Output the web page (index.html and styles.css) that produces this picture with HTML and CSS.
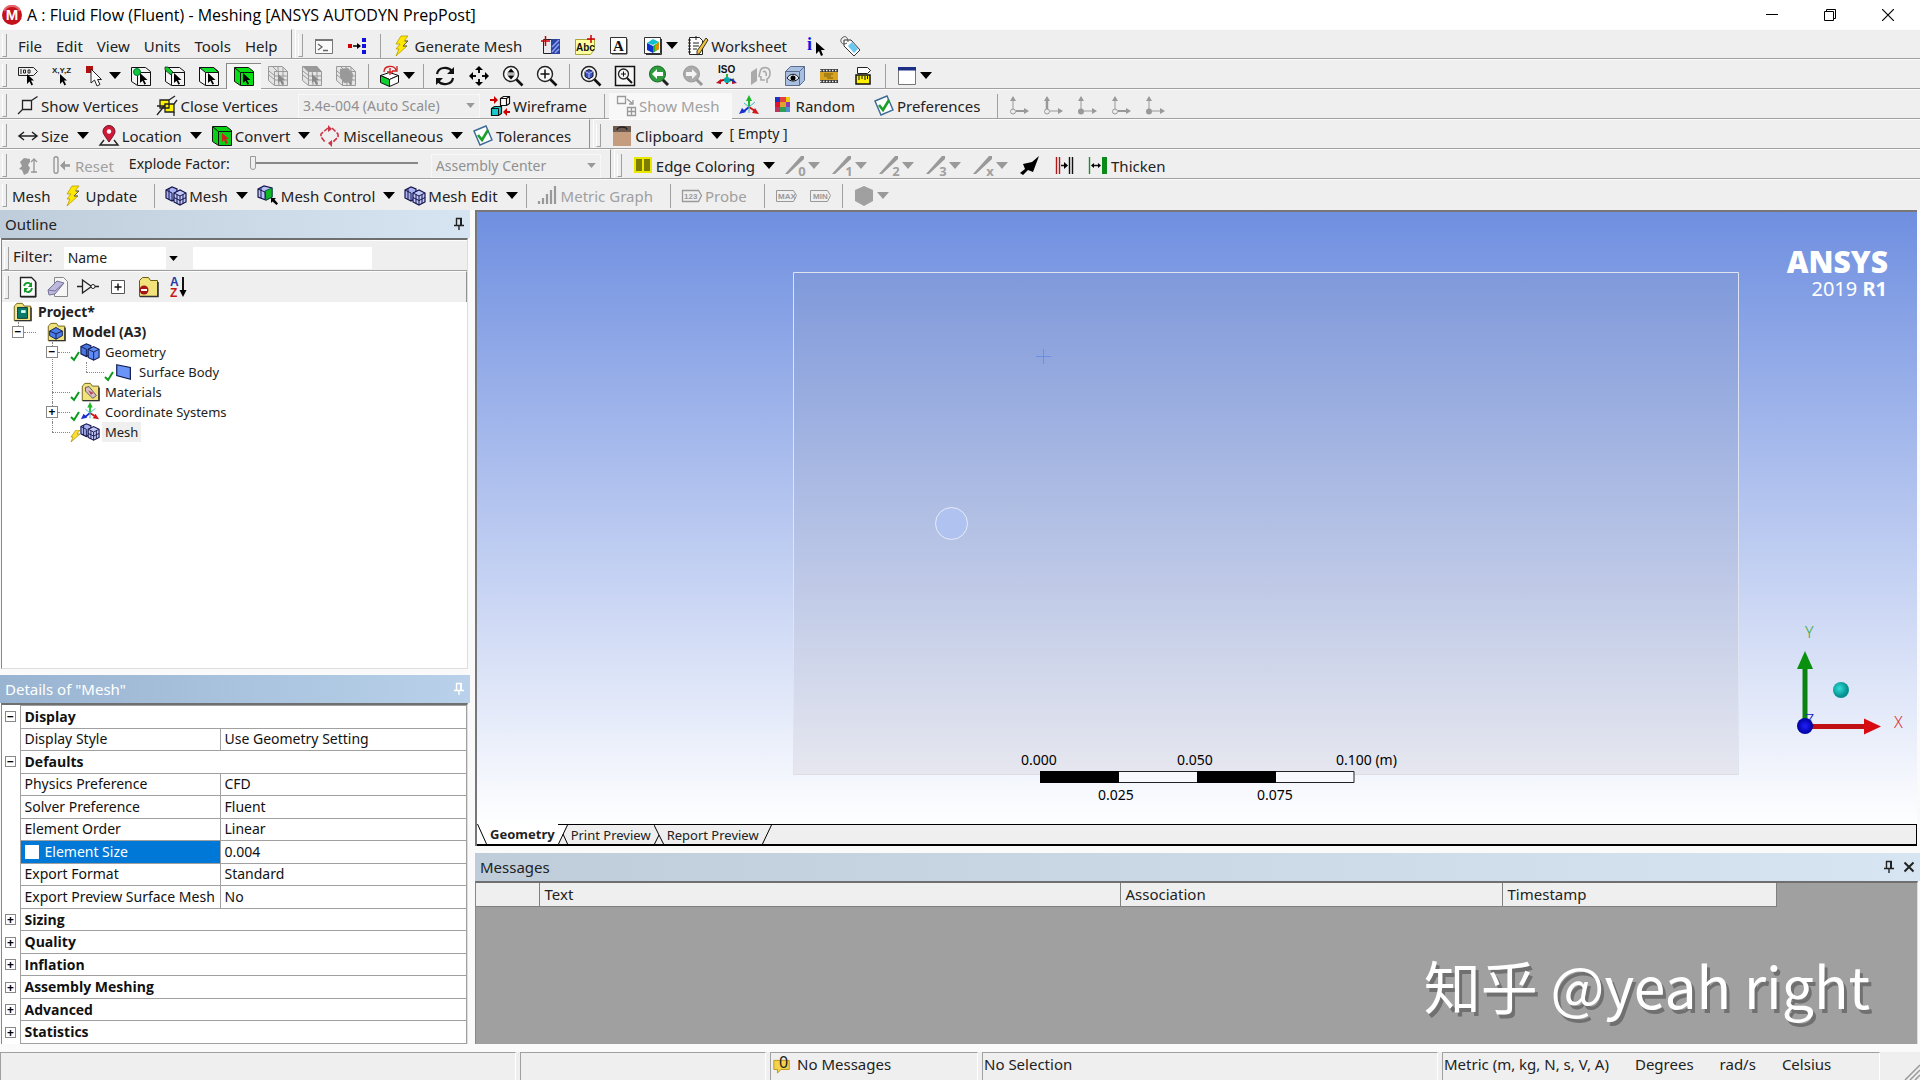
FILE: index.html
```html
<!DOCTYPE html>
<html lang="en">
<head>
  <meta charset="UTF-8" />
  <meta name="viewport" content="width=device-width, initial-scale=1" />
  <title>A : Fluid Flow (Fluent) - Meshing [ANSYS AUTODYN PrepPost]</title>
  <link rel="stylesheet" href="styles.css">
</head>
<body>

  <!-- Icon sprite -->
  <svg class="sprite" aria-hidden="true">
    <symbol id="i-app" viewBox="0 0 22 22"><circle cx="11" cy="11" r="10" fill="#c4121b"/><path d="M3 7a9 9 0 0 1 16 0" fill="none" stroke="#e8656b" stroke-width="2"/><text x="11" y="16" text-anchor="middle" font-family="Liberation Sans" font-size="15" font-weight="700" fill="#fff">M</text></symbol>
    <symbol id="i-console" viewBox="0 0 22 22"><path d="M2.500 4.500h17v14h-17z" fill="#fafafa" stroke="#777"/><path d="M2 5h18" stroke="#777" stroke-width="2"/><path d="M5 9l4 3-4 3M10 15.500h5" fill="none" stroke="#666" stroke-width="1.300"/></symbol>
    <symbol id="i-tree" viewBox="0 0 22 22"><path d="M1 9h4v4H1z" fill="#d00000"/><path d="M6 11h6" stroke="#000" stroke-width="1.500"/><path d="M10 8l4 3-4 3z"/><path d="M15 3h4v4h-4zM15 9h4v4h-4zM15 15h4v4h-4z" fill="#1010e0"/></symbol>
    <symbol id="i-bolt" viewBox="0 0 22 22"><path d="M10 1h7l-4 5h4l-5 5h4L5 21l3-7H5l4-5H5z" fill="#ffe800" stroke="#b99c00" stroke-width=".8"/><path d="M14 6h3l-5 5h4" fill="none" stroke="#555" stroke-width=".9"/></symbol>
    <symbol id="i-section" viewBox="0 0 22 22"><path d="M3.500 4.500h16v14h-16z" fill="#e9e9ee" stroke="#222"/><path d="M11 4h9v15h-9z" fill="#2a43a5"/><path d="M12 12l7-7M12 17l7-8M15 18l4-4" stroke="#8da2ee" stroke-width="1.500"/><path d="M1 6h9M5.500 1v10" stroke="#d00000" stroke-width="1.500"/></symbol>
    <symbol id="i-abc" viewBox="0 0 22 22"><path d="M1.500 4.500h19v10l-4 5h-15z" fill="#ffffa0" stroke="#a6a63a"/><text x="2" y="16" font-family="Liberation Sans Narrow, Liberation Sans" font-size="10" font-weight="700" fill="#111">Abc</text><path d="M13 4h8M17 0v8" stroke="#d00000" stroke-width="1.500"/></symbol>
    <symbol id="i-text" viewBox="0 0 22 22"><path d="M2.500 2.500h16v16h-16z" fill="#fff" stroke="#333"/><path d="M19 4v15H4" fill="none" stroke="#333"/><text x="5" y="16" font-family="Liberation Serif" font-size="15" font-weight="700" fill="#111">A</text></symbol>
    <symbol id="i-image" viewBox="0 0 22 22"><path d="M2.500 2.500h16v16h-16z" fill="#fff" stroke="#333"/><path d="M19.500 4v15.500H4" fill="none" stroke="#333"/><path d="M5 8l6-4 6 3-6 3z" fill="#10c0d0"/><path d="M5 8l6 3v7l-6-3z" fill="#1030d0"/><path d="M11 11l6-4v7l-6 4z" fill="#20b020"/><path d="M13 11l4-4v7l-4 2z" fill="#e09000"/></symbol>
    <symbol id="i-worksheet" viewBox="0 0 22 22"><path d="M2.500 2.500h10l3 3v14h-13z" fill="#fff" stroke="#222"/><path d="M1 5h3M1 8h3M1 11h3M1 14h3M1 17h3M6 8h6M6 11h6M6 14h4M9 1v4" stroke="#222"/><path d="M19 3l2 2-8 13-3 2 0-4z" fill="#f0c33c" stroke="#222" stroke-width=".9"/></symbol>
    <symbol id="i-info" viewBox="0 0 22 22"><text x="2" y="15" font-family="Liberation Serif" font-size="18" font-weight="700" fill="#1515e0">i</text><path d="M11 7v12l3-3 2 5 2-1-2-5h4z"/></symbol>
    <symbol id="i-tag" viewBox="0 0 22 22"><path d="M5 5l7 0 9 10-6 6-10-10z" fill="#fff" stroke="#333"/><path d="M9 11l4-4 6 7-4 4z" fill="#69c7f0"/><path d="M8 8C3 11 0 6 3 3s6-1 6 4" fill="none" stroke="#555"/></symbol>

    <symbol id="i-tagpick" viewBox="0 0 22 22"><path d="M1.500 2.500h15l4 4-4 4h-15z" fill="none" stroke="#222"/><path d="M4 4v5M6.500 5v3h2V5zM11 5v3h2V5z" fill="none" stroke="#222"/><path d="M10 9v10l2.500-2.500 2 4 1.500-1-2-4h3z"/></symbol>
    <symbol id="i-xyz" viewBox="0 0 22 22"><text x="1" y="8" font-family="Liberation Sans" font-size="8" font-weight="700" fill="#222">X,Y,Z</text><path d="M9 9v10l2.500-2.500 2 4 1.500-1-2-4h3z"/></symbol>
    <symbol id="i-pick" viewBox="0 0 22 22"><path d="M1 1h7v7H1z" fill="#b01010"/><path d="M6 4v14l3.500-3 2.500 6 3-1.500-2.500-5h4z" fill="#fff" stroke="#222"/></symbol>
    <symbol id="i-cursor" viewBox="0 0 22 22"><path d="M10 8v10l2.500-2.300 2 4 1.500-1-2-3.700h3.500z"/></symbol>
    <symbol id="i-vertex" viewBox="0 0 22 22"><path d="M1.500 2.500h14l5 4v14h-13l-6-4z" fill="#f4f4f4" stroke="#111"/><path d="M7.500 20V7.500h13" fill="none" stroke="#111"/><circle cx="7" cy="7" r="3.500" fill="#10c830" stroke="#075"/><use href="#i-cursor"/></symbol>
    <symbol id="i-edge" viewBox="0 0 22 22"><path d="M1.500 2.500h14l5 4v14h-13l-6-4z" fill="#f4f4f4" stroke="#111"/><path d="M7.500 20V7.500h13" fill="none" stroke="#111"/><path d="M1 2h3l5 5-2 3-6-5z" fill="#10c830" stroke="#111" stroke-width=".7"/><use href="#i-cursor"/></symbol>
    <symbol id="i-face" viewBox="0 0 22 22"><path d="M1.500 2.500h14l5 4v14h-13l-6-4z" fill="#f4f4f4" stroke="#111"/><path d="M1.500 2.500h14l5 5h-13z" fill="#10e030" stroke="#111"/><path d="M7.500 20V7.500" stroke="#111"/><use href="#i-cursor"/></symbol>
    <symbol id="i-body" viewBox="0 0 22 22"><path d="M1.500 2.500h14l5 4v14h-13l-6-4z" fill="#08e015" stroke="#111"/><path d="M2 3l5.500 4.500V20M7.500 7.500h13" fill="none" stroke="#111"/><use href="#i-cursor"/></symbol>
    <symbol id="i-meshgray" viewBox="0 0 22 22"><path d="M1.500 1.500h14l5 5v14h-13l-6-5z" fill="#e4e4e4" stroke="#999"/><path d="M7.500 20V6.500h13M2 6l6 5h12M2 10l6 5h12M11 2l1 18M16 2v18M6 2l5 5" fill="none" stroke="#999"/><path d="M11 9v9l2-2 2 4 2-1-2-4h3z" fill="#888"/></symbol>
    <symbol id="i-meshface" viewBox="0 0 22 22"><use href="#i-meshgray"/><path d="M1 1h15l5 6H7z" fill="#999"/></symbol>
    <symbol id="i-meshbody" viewBox="0 0 22 22"><use href="#i-meshgray"/><path d="M5 4l8-1 5 6-1 8-8 1-4-6z" fill="#999"/></symbol>
    <symbol id="i-orient" viewBox="0 0 22 22"><path d="M1.500 10.500l9-3 9 3-9 4z" fill="#fff" stroke="#111"/><path d="M1.500 10.500l9 4v7l-9-4z" fill="#10d030" stroke="#111"/><path d="M19.500 10.500l-9 4v7l9-4z" fill="#fff" stroke="#111"/><path d="M5 7c0-7 10-7 12-2M18 1v5h-5M11 3v7M8 7h6" fill="none" stroke="#d02020" stroke-width="1.300"/></symbol>
    <symbol id="i-rotate" viewBox="0 0 22 22"><path d="M3 9c1-7 11-8 15-3M19 13c-1 7-11 8-15 3" fill="none" stroke="#111" stroke-width="2.200"/><path d="M20 2v7h-7zM2 20v-7h7z" fill="#111"/></symbol>
    <symbol id="i-pan" viewBox="0 0 22 22"><path d="M11 4v4M11 14v4M4 11h4M14 11h4" stroke="#111" stroke-width="2"/><path d="M11 1l4 4H7zM11 21l4-4H7zM1 11l4-4v8zM21 11l-4-4v8z"/></symbol>
    <symbol id="i-lens" viewBox="0 0 22 22"><circle cx="9" cy="9" r="7.500" fill="#f8f8f8" stroke="#222" stroke-width="1.400"/><path d="M14.500 14.500l6 6" stroke="#111" stroke-width="2.600"/></symbol>
    <symbol id="i-zoom" viewBox="0 0 22 22"><use href="#i-lens"/><path d="M9 3.500l3.500 4h-7zM9 14.500l3.500-4h-7z"/><path d="M5 9h8" stroke="#777"/></symbol>
    <symbol id="i-zoomin" viewBox="0 0 22 22"><use href="#i-lens"/><path d="M9 4.500v9M4.500 9h9" stroke="#111" stroke-width="1.500"/></symbol>
    <symbol id="i-zoomfit" viewBox="0 0 22 22"><use href="#i-lens"/><path d="M5 6.500l4-2 4 2v5l-4 2.500-4-2.500z" fill="#3c52c0" stroke="#112"/><path d="M5 6.500l4 2 4-2M9 9v4" fill="none" stroke="#b4c2ff"/></symbol>
    <symbol id="i-zoombox" viewBox="0 0 22 22"><path d="M1.500 1.500h19v19h-19z" fill="#f6f6f6" stroke="#111" stroke-width="1.500"/><circle cx="9.500" cy="9" r="5" fill="none" stroke="#222" stroke-width="1.300"/><path d="M13 13l5 5" stroke="#111" stroke-width="2"/><path d="M7 9h5M9.500 6.500v5" stroke="#111"/></symbol>
    <symbol id="i-zoomprev" viewBox="0 0 22 22"><path d="M14 14l6 6" stroke="#222" stroke-width="3"/><circle cx="9.500" cy="9" r="8" fill="#2c9c3c" stroke="#176a24"/><path d="M4 9l5-5v3h6v4H9v3z" fill="#fff"/></symbol>
    <symbol id="i-zoomnext" viewBox="0 0 22 22"><path d="M14 14l6 6" stroke="#999" stroke-width="3"/><circle cx="9.500" cy="9" r="8" fill="#aaa" stroke="#999"/><path d="M15 9l-5-5v3H4v4h6v3z" fill="#f4f4f4"/></symbol>
    <symbol id="i-iso" viewBox="0 0 22 22"><text x="2" y="8" font-family="Liberation Sans" font-size="10" font-weight="700" fill="#111">ISO</text><path d="M11 12v-3M11 17l7-3" stroke="#090" stroke-width="1.500"/><path d="M4 16l7-2v5" stroke="#c00" stroke-width="2" fill="none"/><circle cx="11" cy="15" r="3" fill="#0aa" /><path d="M0 18l5-4v5zM21 18l-5-4v5z" fill="#c01020"/><path d="M14 14l5 3" stroke="#1030c0" stroke-width="2"/></symbol>
    <symbol id="i-lookat" viewBox="0 0 22 22"><path d="M1 7l6-4v13l-6 4z" fill="#aaa"/><path d="M10 7c1-6 10-6 10 1 0 3-1 5-3 6v4M10 7l-1 4 2 1v3h4M13 7c2-2 4 1 3 4" fill="none" stroke="#aaa" stroke-width="1.600"/></symbol>
    <symbol id="i-eye" viewBox="0 0 22 22"><path d="M1.500 6.500l5-5h14v14l-5 5h-14z" fill="#a9bfe0" stroke="#5b6d8c"/><path d="M1.500 6.500h14v14M15.500 6.500l5-5" fill="none" stroke="#5b6d8c"/><path d="M3 13c3-5 9-5 12 0-3 4-9 4-12 0z" fill="#dfe8f5" stroke="#111"/><circle cx="9" cy="13" r="2.500"/></symbol>
    <symbol id="i-film" viewBox="0 0 22 22"><path d="M2 4h18v14H2z" fill="#3b3b3b"/><path d="M2 7h18v8H2z" fill="#d9a520"/><path d="M2 5.500h18M2 16.500h18" stroke="#eee" stroke-width="1.500" stroke-dasharray="1.500 1.500"/><path d="M6 9h9M6 11h7M9 13h6" stroke="#7a5a10"/></symbol>
    <symbol id="i-ruler" viewBox="0 0 22 22"><path d="M5.500 2.500h10l3 3-3 3h-10z" fill="#fff" stroke="#222"/><path d="M4 10h14v9H4z" fill="#fff000" stroke="#111" stroke-width="1.500"/><path d="M7 11v4M10 11v3M13 11v4M15.500 11v3" stroke="#111"/></symbol>
    <symbol id="i-window" viewBox="0 0 22 22"><path d="M2.500 2.500h17v17h-17z" fill="#fff" stroke="#777"/><path d="M2 2h18v3.500H2z" fill="#1b2f84"/></symbol>

    <symbol id="i-showvert" viewBox="0 0 22 22"><path d="M5.500 5.500h9v9h-9zM14.500 5.500l6-4M1 19l4.500-4.500" fill="none" stroke="#222" stroke-width="1.300"/></symbol>
    <symbol id="i-closevert" viewBox="0 0 22 22"><path d="M4 5h9v8H4zM9 9h9v8H9z" fill="#fff200" stroke="#222" stroke-width="1.300"/><path d="M13 5l6-4M1 20l8-10M1 11h8M18 9l3-4M18 17v4" stroke="#222" stroke-width="1.300"/></symbol>
    <symbol id="i-wire" viewBox="0 0 22 22"><path d="M11.500 3.500l3-2h6v7l-3 2h-6zM11.500 3.500h6v7M17.500 3.500l3-2" fill="#fff" stroke="#111" stroke-width="1.200"/><path d="M2.500 13.500l3-2h7v7l-3 2h-7z" fill="#19c8c8" stroke="#111" stroke-width="1.200"/><path d="M2.500 13.500h7v7" fill="none" stroke="#111"/><path d="M1 5h4M21 17h-4" stroke="#c00" stroke-width="2"/><path d="M5 1l4 4-4 4zM18 13l-4 4 4 4z" fill="#c00"/></symbol>
    <symbol id="i-showmesh" viewBox="0 0 22 22"><path d="M2.500 1.500h8v7h-8zM12.500 12.500h8v8h-8zM16.500 12.500v8M12.500 16.500h8M12 4l6 5M18 5v4h-4" fill="none" stroke="#999" stroke-width="1.300"/></symbol>
    <symbol id="i-axes" viewBox="0 0 22 22"><path d="M11 13V4" stroke="#18b828" stroke-width="2"/><path d="M11 0l3 6H8z" fill="#18b828"/><path d="M11 12l-6 5" stroke="#1830d0" stroke-width="2"/><path d="M1 19l3-6 4 4z" fill="#1830d0"/><path d="M11 12l6 4" stroke="#d01818" stroke-width="2"/><path d="M21 19l-7-1 3-5z" fill="#d01818"/><path d="M11 12l6-5M11 12L6 8M11 12v6" stroke="#38b8c8"/></symbol>
    <symbol id="i-random" viewBox="0 0 22 22"><path d="M3 2h5v5H3z" fill="#2030c0"/><path d="M8 2h6v5H8z" fill="#e04040"/><path d="M14 2h4v5h-4z" fill="#f0d000"/><path d="M3 7h5v5H3z" fill="#e01030"/><path d="M8 7h6v5H8z" fill="#e0a030"/><path d="M14 7h4v5h-4z" fill="#8a3ab0"/><path d="M3 12h5v5H3z" fill="#c03060"/><path d="M8 12h6v5H8z" fill="#30a050"/><path d="M14 12h4v5h-4z" fill="#5090d0"/></symbol>
    <symbol id="i-check" viewBox="0 0 22 22"><path d="M2 6l12-5 6 14-12 5z" fill="#fff" stroke="#3b6a96" stroke-width="1.400"/><path d="M6 10l4 5 6-10" fill="none" stroke="#18a028" stroke-width="2.600"/></symbol>
    <symbol id="i-dir1" viewBox="0 0 22 22"><path d="M5 14V5" stroke="#999"/><path d="M5 1l3 5H2zM21 16l-5-3v6z" fill="#999"/><path d="M8 16h9" stroke="#999" stroke-width="2"/><circle cx="5" cy="16.500" r="2.500" fill="#eee" stroke="#999"/></symbol>
    <symbol id="i-dir2" viewBox="0 0 22 22"><path d="M5 14V5" stroke="#999" stroke-width="2.500"/><path d="M5 1l3 5H2zM21 16l-5-3v6z" fill="#999"/><path d="M8 16h9" stroke="#999"/><circle cx="5" cy="16.500" r="2.500" fill="#eee" stroke="#999"/></symbol>
    <symbol id="i-dir3" viewBox="0 0 22 22"><path d="M5 14V5M8 16h9" stroke="#999"/><path d="M5 1l3 5H2zM21 16l-5-3v6z" fill="#999"/><circle cx="5" cy="16.500" r="3" fill="#999"/></symbol>

    <symbol id="i-size" viewBox="0 0 22 22"><path d="M3 11h16M7 7l-5 4 5 4M15 7l5 4-5 4" fill="none" stroke="#222" stroke-width="1.500"/></symbol>
    <symbol id="i-pin" viewBox="0 0 22 22"><path d="M11 17C7 11 5 9 5 6.500a6 6 0 0 1 12 0C17 9 15 11 11 17z" fill="#d01838" stroke="#701020"/><circle cx="11" cy="6.500" r="2.200" fill="#fff"/><path d="M6 15l-4 5h18l-4-5" fill="none" stroke="#222" stroke-width="1.400"/></symbol>
    <symbol id="i-convert" viewBox="0 0 22 22"><path d="M1.500 1.500h14l5 4v15h-13l-6-4z" fill="#08d015" stroke="#111"/><path d="M2 2l5.500 4.500V20M7.500 6.500h13" fill="none" stroke="#111"/><path d="M11 8v9l2-2 2 4 2-1-2-4h3z" fill="#d02020"/></symbol>
    <symbol id="i-misc" viewBox="0 0 22 22"><path d="M9 3L2 9v3l4 5M13 3l6 6v3l-6 6" fill="none" stroke="#cc3344" stroke-width="1.600" stroke-dasharray="5 1.500"/><path d="M9 0l4 4-4 3zM13 15l-4 3 4 4z" fill="#cc3344"/></symbol>
    <symbol id="i-clip" viewBox="0 0 22 22"><path d="M2 2h18v19H2z" fill="#c69c7e"/><path d="M2 1h18v6H2z" fill="#6d5b52"/><path d="M6 5c0-4 10-4 10 0" fill="none" stroke="#222" stroke-width="1.300"/></symbol>
    <symbol id="i-explode" viewBox="0 0 22 22"><path d="M3 7l4-4 6 1v3l-2 3 2 3-2 5-4 2-2-5-3-1 3-3z" fill="#999"/><path d="M17 5v13M14 7l3-3 3 3M14 17h6" fill="none" stroke="#999" stroke-width="1.400"/></symbol>
    <symbol id="i-reset" viewBox="0 0 22 22"><path d="M3 4c0-3 4-3 4 0v12c0 3-4 3-4 0z" fill="none" stroke="#999" stroke-width="1.400"/><path d="M12 10.500h7" stroke="#999" stroke-width="2.500"/><path d="M9 10.500l5-5v10z" fill="#999"/></symbol>
    <symbol id="i-coloring" viewBox="0 0 22 22"><path d="M2 2h18v16H2z" fill="#e8e800"/><path d="M4 4h6v12H4zM12 4h6v12h-6z" fill="#7c7c00"/></symbol>
    <symbol id="i-edgeline" viewBox="0 0 22 22"><path d="M1 19h3L20 4V1h-3z" fill="#999"/></symbol>
    <symbol id="i-arrowne" viewBox="0 0 22 22"><path d="M1 18l5-4-2-5 9-2 7-6-3 8-3 8-5-2-5 5z"/></symbol>
    <symbol id="i-gap" viewBox="0 0 22 22"><path d="M3.500 2v17M6.500 2v17" stroke="#b01818" stroke-width="1.400"/><path d="M16.500 2v17M19.500 2v17M8 10.500h5" stroke="#111" stroke-width="1.400"/><path d="M11 7l4 3.500-4 3.500z"/></symbol>
    <symbol id="i-thicken" viewBox="0 0 22 22"><path d="M2.500 2v17" stroke="#18902a" stroke-width="1.400"/><path d="M15 2h5v17h-5z" fill="#0a8a18"/><path d="M5 10.500h7" stroke="#111" stroke-width="1.500"/><path d="M7 8l-3 2.500L7 13zM11 8l3 2.500-3 2.500z"/></symbol>

    <symbol id="i-cubes" viewBox="0 0 22 22"><path d="M1 5l6-3 5 2v9l-5 3-6-3z" fill="#a9b2f0" stroke="#14144a" stroke-width="1.200"/><path d="M9 8l6-3 6 3v9l-6 3-6-3z" fill="#c3caf8" stroke="#14144a" stroke-width="1.200"/><path d="M9 8l6 3 6-3M15 11v9M1 5l6 3v8M12 9.500v9M18 9.500v9M9 12.500l6 3 6-3M4 3.500v11" fill="none" stroke="#14144a"/></symbol>
    <symbol id="i-control" viewBox="0 0 22 22"><path d="M1 4l6-3 8 2v9l-6 3-8-3z" fill="#b9c1f6" stroke="#14144a" stroke-width="1.200"/><path d="M8 6l7-3v9l-6 3z" fill="#10b828" stroke="#063" /><path d="M1 4l7 3v7M4 3v10" fill="none" stroke="#14144a"/><path d="M14 13h5l-1.500 1.500 3.500 4-1.500 1.500-4-3.500-1.500 1.500z"/></symbol>
    <symbol id="i-geom" viewBox="0 0 22 22"><path d="M1 5l6-3 5 2v9l-5 3-6-3z" fill="#4a78e0" stroke="#101c50" stroke-width="1.200"/><path d="M9 8l6-3 6 3v9l-6 3-6-3z" fill="#5e8cf4" stroke="#101c50" stroke-width="1.200"/><path d="M9 8l6 3 6-3M15 11v9M1 5l6 3v8" fill="none" stroke="#101c50"/></symbol>
    <symbol id="i-graph" viewBox="0 0 22 22"><path d="M2 19v-3M6 19v-6M10 19V9M14 19V5M18 19V1" stroke="#999" stroke-width="2.200"/></symbol>
    <symbol id="i-probe" viewBox="0 0 22 22"><path d="M1.500 5.500h16l3 5-3 6h-16z" fill="none" stroke="#999" stroke-width="1.300"/><text x="3" y="14" font-family="Liberation Sans" font-size="8" font-weight="700" fill="#999">123</text></symbol>
    <symbol id="i-max" viewBox="0 0 22 22"><path d="M1.500 5.500h17l3 5-3 6h-17z" fill="none" stroke="#999"/><text x="3" y="14" font-family="Liberation Sans Narrow, Liberation Sans" font-size="8" font-weight="700" fill="#999">MAX</text></symbol>
    <symbol id="i-min" viewBox="0 0 22 22"><path d="M1.500 5.500h17l3 5-3 6h-17z" fill="none" stroke="#999"/><text x="4" y="14" font-family="Liberation Sans Narrow, Liberation Sans" font-size="8" font-weight="700" fill="#999">MIN</text></symbol>
    <symbol id="i-hex" viewBox="0 0 22 22"><path d="M11 1l9 4v11l-9 5-9-5V5z" fill="#a0a0a0"/></symbol>

    <symbol id="i-refresh" viewBox="0 0 22 22"><path d="M3.500 1.500h11l4 4v15h-15z" fill="#fff" stroke="#222" stroke-width="1.300"/><path d="M19 6v15H4" fill="none" stroke="#222"/><path d="M7 10c1-4 6-4 7-1M15 12c-1 5-6 5-7 2" fill="none" stroke="#139a28" stroke-width="1.800"/><path d="M15 6v5h-4zM7 17v-5h4z" fill="#139a28"/></symbol>
    <symbol id="i-eraser" viewBox="0 0 22 22"><path d="M7.500 1.500h9l4 4v15h-13z" fill="#f6f6f6" stroke="#888"/><path d="M1 14l9-9 7 2-9 11-6 1z" fill="#bdb9dd" stroke="#77739a"/><path d="M1 14l7 1 9-8" fill="none" stroke="#77739a"/></symbol>
    <symbol id="i-gate" viewBox="0 0 22 22"><path d="M5.500 4l9 6.500-9 6.500zM0 10.500h5M18 10.500h4" fill="none" stroke="#222" stroke-width="1.300"/><circle cx="16" cy="10.500" r="2" fill="#fff" stroke="#222"/></symbol>
    <symbol id="i-plusbox" viewBox="0 0 22 22"><path d="M4.500 4.500h13v13h-13z" fill="#fff" stroke="#555"/><path d="M7.500 11h7M11 7.500v7" stroke="#111" stroke-width="1.400"/></symbol>
    <symbol id="i-folder" viewBox="0 0 22 22"><path d="M2.500 20.500v-16l3-3h6l2 3h7v16z" fill="#f1e27c" stroke="#6b5e14"/><path d="M3 20.500h18V6" fill="none" stroke="#333" stroke-width="1.600"/></symbol>
    <symbol id="i-hide" viewBox="0 0 22 22"><use href="#i-folder"/><circle cx="7" cy="14" r="4.500" fill="#a51515"/><path d="M4 14h6" stroke="#fff" stroke-width="2"/></symbol>
    <symbol id="i-sort" viewBox="0 0 22 22"><text x="3" y="10" font-family="Liberation Sans" font-size="12" font-weight="700" fill="#2438a8">A</text><text x="3" y="21" font-family="Liberation Sans" font-size="12" font-weight="700" fill="#c81414">Z</text><path d="M16 1v15" stroke="#111" stroke-width="2"/><path d="M12.500 14h7L16 21z"/></symbol>
    <symbol id="i-project" viewBox="0 0 22 22"><use href="#i-folder"/><path d="M6 6h11v12H6z" fill="#0b7a6c" stroke="#033"/><path d="M10 9h5v3h-5z" fill="#d8fff4"/><path d="M5 7v11" stroke="#fff" stroke-dasharray="1 1"/></symbol>
    <symbol id="i-model" viewBox="0 0 22 22"><use href="#i-folder"/><path d="M4 10l7-4 7 4v5l-7 4-7-4z" fill="#4a7ce8" stroke="#101c50"/><path d="M4 10l7 3 7-3M11 13v6" fill="none" stroke="#101c50"/></symbol>
    <symbol id="i-surface" viewBox="0 0 22 22"><path d="M3 3l15 3v13l-15-4z" fill="#6a94f8" stroke="#101c50" stroke-width="1.300"/></symbol>
    <symbol id="i-materials" viewBox="0 0 22 22"><use href="#i-folder"/><path d="M6 6l4-1 8 10-4 3-8-8z" fill="#d9c0c8" stroke="#555"/><path d="M9 9l3 5 3-2z" fill="#c04060"/></symbol>
    <symbol id="i-tick" viewBox="0 0 10 12"><path d="M1 7l3 3 5-8" fill="none" stroke="#0c9a1c" stroke-width="2"/></symbol>
    <symbol id="i-smallbolt" viewBox="0 0 10 12"><path d="M6 0h4L7 4h3L1 12l2-5H1z" fill="#ffe030" stroke="#a88c00" stroke-width=".7"/></symbol>
    <symbol id="i-thumbtack" viewBox="0 0 12 14"><path d="M3.500 1v7M8 1v7M3 1.500h6M1 8.500h10M6 9v4" fill="none" stroke="currentColor" stroke-width="1.400"/><path d="M7 1h2v7H7z" fill="currentColor"/></symbol>
    <symbol id="i-cross" viewBox="0 0 12 12"><path d="M1.500 1.500l9 9M10.500 1.500l-9 9" stroke="currentColor" stroke-width="2"/></symbol>
    <symbol id="i-balloon" viewBox="0 0 22 22"><path d="M2 7h17v10h-9l-4 4v-4H2z" fill="#f3d34a" stroke="#b8921c"/></symbol>
    <symbol id="i-caret" viewBox="0 0 12 7"><path d="M0 0h12L6 7z" fill="currentColor"/></symbol>
  </svg>

  <header class="titlebar">
    <svg class="icon"><use href="#i-app"/></svg>
    <h1>A : Fluid Flow (Fluent) - Meshing [ANSYS AUTODYN PrepPost]</h1>
    <div class="window-buttons">
      <button type="button" aria-label="Minimize"><svg viewBox="0 0 12 12"><path d="M0 5.500h12" stroke="#000"/></svg></button>
      <button type="button" aria-label="Restore"><svg viewBox="0 0 12 12"><path d="M.5 2.500h9v9h-9zM2.500 2.500v-2h9v9h-2" fill="none" stroke="#000"/></svg></button>
      <button type="button" aria-label="Close"><svg viewBox="0 0 12 12"><path d="M0 0l12 12M12 0L0 12" stroke="#000" stroke-width="1.200"/></svg></button>
    </div>
  </header>

  <div class="toolbars">
    <div class="toolbar">
      <nav class="band">
        <button type="button" class="menu">File</button>
        <button type="button" class="menu">Edit</button>
        <button type="button" class="menu">View</button>
        <button type="button" class="menu">Units</button>
        <button type="button" class="menu">Tools</button>
        <button type="button" class="menu">Help</button>
      </nav>
      <div class="band">
        <button type="button" class="tool" aria-label="Command window"><svg class="icon"><use href="#i-console"/></svg></button>
        <button type="button" class="tool" aria-label="Object generator"><svg class="icon"><use href="#i-tree"/></svg></button>
        <span class="sep"></span>
        <button type="button" class="tool"><svg class="icon"><use href="#i-bolt"/></svg><span>Generate Mesh</span></button>
        <button type="button" class="tool" aria-label="Section plane"><svg class="icon"><use href="#i-section"/></svg></button>
        <button type="button" class="tool" aria-label="Annotation"><svg class="icon"><use href="#i-abc"/></svg></button>
        <button type="button" class="tool" aria-label="Comment"><svg class="icon"><use href="#i-text"/></svg></button>
        <button type="button" class="tool" aria-label="Image"><svg class="icon"><use href="#i-image"/></svg><svg class="caret"><use href="#i-caret"/></svg></button>
        <button type="button" class="tool"><svg class="icon"><use href="#i-worksheet"/></svg><span>Worksheet</span></button>
        <button type="button" class="tool" aria-label="Selection information"><svg class="icon"><use href="#i-info"/></svg></button>
        <button type="button" class="tool" aria-label="Tags"><svg class="icon"><use href="#i-tag"/></svg></button>
      </div>
    </div>

    <div class="toolbar">
      <div class="band">
        <button type="button" class="tool" aria-label="Label"><svg class="icon"><use href="#i-tagpick"/></svg></button>
        <button type="button" class="tool" aria-label="Hit point coordinates"><svg class="icon"><use href="#i-xyz"/></svg></button>
        <button type="button" class="tool" aria-label="Select mode"><svg class="icon"><use href="#i-pick"/></svg><svg class="caret"><use href="#i-caret"/></svg></button>
        <button type="button" class="tool" aria-label="Vertex"><svg class="icon"><use href="#i-vertex"/></svg></button>
        <button type="button" class="tool" aria-label="Edge"><svg class="icon"><use href="#i-edge"/></svg></button>
        <button type="button" class="tool" aria-label="Face"><svg class="icon"><use href="#i-face"/></svg></button>
        <button type="button" class="tool pressed" aria-label="Body"><svg class="icon"><use href="#i-body"/></svg></button>
        <button type="button" class="tool" aria-label="Node" disabled><svg class="icon"><use href="#i-meshgray"/></svg></button>
        <button type="button" class="tool" aria-label="Element face" disabled><svg class="icon"><use href="#i-meshface"/></svg></button>
        <button type="button" class="tool" aria-label="Element" disabled><svg class="icon"><use href="#i-meshbody"/></svg></button>
        <span class="sep"></span>
        <button type="button" class="tool" aria-label="Extend selection"><svg class="icon"><use href="#i-orient"/></svg><svg class="caret"><use href="#i-caret"/></svg></button>
        <span class="sep"></span>
        <button type="button" class="tool" aria-label="Rotate"><svg class="icon"><use href="#i-rotate"/></svg></button>
        <button type="button" class="tool" aria-label="Pan"><svg class="icon"><use href="#i-pan"/></svg></button>
        <button type="button" class="tool" aria-label="Zoom"><svg class="icon"><use href="#i-zoom"/></svg></button>
        <button type="button" class="tool" aria-label="Box zoom"><svg class="icon"><use href="#i-zoomin"/></svg></button>
        <span class="sep"></span>
        <button type="button" class="tool" aria-label="Zoom to fit"><svg class="icon"><use href="#i-zoomfit"/></svg></button>
        <button type="button" class="tool" aria-label="Magnifier"><svg class="icon"><use href="#i-zoombox"/></svg></button>
        <button type="button" class="tool" aria-label="Previous view"><svg class="icon"><use href="#i-zoomprev"/></svg></button>
        <button type="button" class="tool" aria-label="Next view" disabled><svg class="icon"><use href="#i-zoomnext"/></svg></button>
        <button type="button" class="tool" aria-label="Isometric"><svg class="icon"><use href="#i-iso"/></svg></button>
        <button type="button" class="tool" aria-label="Look at" disabled><svg class="icon"><use href="#i-lookat"/></svg></button>
        <button type="button" class="tool" aria-label="Manage views"><svg class="icon"><use href="#i-eye"/></svg></button>
        <button type="button" class="tool" aria-label="Animation"><svg class="icon"><use href="#i-film"/></svg></button>
        <button type="button" class="tool" aria-label="Rescale annotation"><svg class="icon"><use href="#i-ruler"/></svg></button>
        <span class="sep"></span>
        <button type="button" class="tool" aria-label="Viewports"><svg class="icon"><use href="#i-window"/></svg><svg class="caret"><use href="#i-caret"/></svg></button>
      </div>
    </div>

    <div class="toolbar">
      <div class="band">
        <button type="button" class="tool"><svg class="icon"><use href="#i-showvert"/></svg><span>Show Vertices</span></button>
        <button type="button" class="tool"><svg class="icon"><use href="#i-closevert"/></svg><span>Close Vertices</span></button>
        <span class="combo">
          <select aria-label="Vertex scale" disabled><option>3.4e-004 (Auto Scale)</option></select>
          <svg class="caret"><use href="#i-caret"/></svg>
        </span>
        <button type="button" class="tool"><svg class="icon"><use href="#i-wire"/></svg><span>Wireframe</span></button>
        <span class="sep"></span>
        <button type="button" class="tool lit" disabled><svg class="icon"><use href="#i-showmesh"/></svg><span>Show Mesh</span></button>
        <button type="button" class="tool" aria-label="Show coordinate systems"><svg class="icon"><use href="#i-axes"/></svg></button>
        <button type="button" class="tool"><svg class="icon"><use href="#i-random"/></svg><span>Random</span></button>
        <button type="button" class="tool"><svg class="icon"><use href="#i-check"/></svg><span>Preferences</span></button>
        <span class="sep"></span>
        <button type="button" class="tool" aria-label="Edge direction 1" disabled><svg class="icon"><use href="#i-dir1"/></svg></button>
        <button type="button" class="tool" aria-label="Edge direction 2" disabled><svg class="icon"><use href="#i-dir2"/></svg></button>
        <button type="button" class="tool" aria-label="Edge direction 3" disabled><svg class="icon"><use href="#i-dir3"/></svg></button>
        <button type="button" class="tool" aria-label="Edge direction 4" disabled><svg class="icon"><use href="#i-dir1"/></svg></button>
        <button type="button" class="tool" aria-label="Edge direction 5" disabled><svg class="icon"><use href="#i-dir3"/></svg></button>
      </div>
    </div>

    <div class="toolbar">
      <div class="band">
        <button type="button" class="tool"><svg class="icon"><use href="#i-size"/></svg><span>Size</span><svg class="caret"><use href="#i-caret"/></svg></button>
        <button type="button" class="tool"><svg class="icon"><use href="#i-pin"/></svg><span>Location</span><svg class="caret"><use href="#i-caret"/></svg></button>
        <button type="button" class="tool"><svg class="icon"><use href="#i-convert"/></svg><span>Convert</span><svg class="caret"><use href="#i-caret"/></svg></button>
        <button type="button" class="tool"><svg class="icon"><use href="#i-misc"/></svg><span>Miscellaneous</span><svg class="caret"><use href="#i-caret"/></svg></button>
        <button type="button" class="tool"><svg class="icon"><use href="#i-check"/></svg><span>Tolerances</span></button>
      </div>
      <div class="band">
        <button type="button" class="tool"><svg class="icon"><use href="#i-clip"/></svg><span>Clipboard</span><svg class="caret"><use href="#i-caret"/></svg></button>
        <span class="caption">[ Empty ]</span>
      </div>
    </div>

    <div class="toolbar">
      <div class="band">
        <button type="button" class="tool" aria-label="Explode" disabled><svg class="icon"><use href="#i-explode"/></svg></button>
        <button type="button" class="tool" disabled><svg class="icon"><use href="#i-reset"/></svg><span>Reset</span></button>
        <label class="caption" for="explode">Explode Factor:</label>
        <input type="range" id="explode" class="slider" min="0" max="100" value="0">
        <span class="combo short">
          <select aria-label="Explode centre" disabled><option>Assembly Center</option></select>
          <svg class="caret"><use href="#i-caret"/></svg>
        </span>
      </div>
      <div class="band">
        <button type="button" class="tool"><svg class="icon"><use href="#i-coloring"/></svg><span>Edge Coloring</span><svg class="caret"><use href="#i-caret"/></svg></button>
        <button type="button" class="tool numbered" disabled><svg class="icon"><use href="#i-edgeline"/></svg><b>0</b><svg class="caret"><use href="#i-caret"/></svg></button>
        <button type="button" class="tool numbered" disabled><svg class="icon"><use href="#i-edgeline"/></svg><b>1</b><svg class="caret"><use href="#i-caret"/></svg></button>
        <button type="button" class="tool numbered" disabled><svg class="icon"><use href="#i-edgeline"/></svg><b>2</b><svg class="caret"><use href="#i-caret"/></svg></button>
        <button type="button" class="tool numbered" disabled><svg class="icon"><use href="#i-edgeline"/></svg><b>3</b><svg class="caret"><use href="#i-caret"/></svg></button>
        <button type="button" class="tool numbered" disabled><svg class="icon"><use href="#i-edgeline"/></svg><b>x</b><svg class="caret"><use href="#i-caret"/></svg></button>
        <button type="button" class="tool" aria-label="Edge direction"><svg class="icon"><use href="#i-arrowne"/></svg></button>
        <button type="button" class="tool" aria-label="Mesh connection"><svg class="icon"><use href="#i-gap"/></svg></button>
        <button type="button" class="tool"><svg class="icon"><use href="#i-thicken"/></svg><span>Thicken</span></button>
      </div>
    </div>

    <div class="toolbar">
      <div class="band">
        <span class="context">Mesh</span>
        <button type="button" class="tool"><svg class="icon"><use href="#i-bolt"/></svg><span>Update</span></button>
        <span class="sep"></span>
        <button type="button" class="tool"><svg class="icon"><use href="#i-cubes"/></svg><span>Mesh</span><svg class="caret"><use href="#i-caret"/></svg></button>
        <button type="button" class="tool"><svg class="icon"><use href="#i-control"/></svg><span>Mesh Control</span><svg class="caret"><use href="#i-caret"/></svg></button>
        <button type="button" class="tool"><svg class="icon"><use href="#i-cubes"/></svg><span>Mesh Edit</span><svg class="caret"><use href="#i-caret"/></svg></button>
        <span class="sep"></span>
        <button type="button" class="tool" disabled><svg class="icon"><use href="#i-graph"/></svg><span>Metric Graph</span></button>
        <span class="sep"></span>
        <button type="button" class="tool" disabled><svg class="icon"><use href="#i-probe"/></svg><span>Probe</span></button>
        <span class="sep"></span>
        <button type="button" class="tool" aria-label="Maximum" disabled><svg class="icon"><use href="#i-max"/></svg></button>
        <button type="button" class="tool" aria-label="Minimum" disabled><svg class="icon"><use href="#i-min"/></svg></button>
        <span class="sep"></span>
        <button type="button" class="tool" aria-label="Element display" disabled><svg class="icon"><use href="#i-hex"/></svg><svg class="caret"><use href="#i-caret"/></svg></button>
      </div>
    </div>
  </div>

  <main>
    <div class="dock">
      <!-- Outline -->
      <section class="panel outline">
        <header class="panel-title"><h2>Outline</h2><svg class="tack"><use href="#i-thumbtack"/></svg></header>
        <div class="panel-body">
          <div class="band filter">
            <label for="filterBy">Filter:</label>
            <span class="combo white">
              <select id="filterBy"><option>Name</option></select>
              <svg class="caret"><use href="#i-caret"/></svg>
            </span>
            <input type="text" class="filter-text" aria-label="Filter text">
          </div>
          <div class="band tree-tools">
            <button type="button" class="tool" aria-label="Refresh"><svg class="icon"><use href="#i-refresh"/></svg></button>
            <button type="button" class="tool" aria-label="Clear"><svg class="icon"><use href="#i-eraser"/></svg></button>
            <button type="button" class="tool" aria-label="Invert filter"><svg class="icon"><use href="#i-gate"/></svg></button>
            <button type="button" class="tool" aria-label="Expand all"><svg class="icon"><use href="#i-plusbox"/></svg></button>
            <button type="button" class="tool" aria-label="Hide folders"><svg class="icon"><use href="#i-hide"/></svg></button>
            <button type="button" class="tool" aria-label="Sort"><svg class="icon"><use href="#i-sort"/></svg></button>
          </div>
          <div class="tree">
            <div class="node root"><svg class="icon"><use href="#i-project"/></svg><span class="name strong">Project*</span></div>
            <ul>
              <li>
                <div class="node"><button type="button" class="toggle" aria-label="Collapse">−</button><i class="stub"></i><i class="state"></i><svg class="icon"><use href="#i-model"/></svg><span class="name strong">Model (A3)</span></div>
                <ul>
                  <li>
                    <div class="node"><button type="button" class="toggle" aria-label="Collapse">−</button><i class="stub"></i><svg class="state"><use href="#i-tick"/></svg><svg class="icon"><use href="#i-geom"/></svg><span class="name">Geometry</span></div>
                    <ul>
                      <li><div class="node"><i class="stub"></i><svg class="state"><use href="#i-tick"/></svg><svg class="icon"><use href="#i-surface"/></svg><span class="name">Surface Body</span></div></li>
                    </ul>
                  </li>
                  <li><div class="node"><i class="stub"></i><svg class="state"><use href="#i-tick"/></svg><svg class="icon"><use href="#i-materials"/></svg><span class="name">Materials</span></div></li>
                  <li><div class="node"><button type="button" class="toggle" aria-label="Expand">+</button><i class="stub"></i><svg class="state"><use href="#i-tick"/></svg><svg class="icon"><use href="#i-axes"/></svg><span class="name">Coordinate Systems</span></div></li>
                  <li><div class="node"><i class="stub"></i><svg class="state"><use href="#i-smallbolt"/></svg><svg class="icon"><use href="#i-cubes"/></svg><span class="name current">Mesh</span></div></li>
                </ul>
              </li>
            </ul>
          </div>
        </div>
      </section>

      <!-- Details -->
      <section class="panel details">
        <header class="panel-title active"><h2>Details of "Mesh"</h2><svg class="tack"><use href="#i-thumbtack"/></svg></header>
        <div class="panel-body">
          <table class="props">
            <tr><td class="gutter"><button type="button" class="toggle" aria-label="Collapse">−</button></td><th colspan="2">Display</th></tr>
            <tr><td class="gutter"></td><td class="key">Display Style</td><td>Use Geometry Setting</td></tr>
            <tr><td class="gutter"><button type="button" class="toggle" aria-label="Collapse">−</button></td><th colspan="2">Defaults</th></tr>
            <tr><td class="gutter"></td><td class="key">Physics Preference</td><td>CFD</td></tr>
            <tr><td class="gutter"></td><td class="key">Solver Preference</td><td>Fluent</td></tr>
            <tr><td class="gutter"></td><td class="key">Element Order</td><td>Linear</td></tr>
            <tr><td class="gutter"></td><td class="key selected"><label><input type="checkbox">Element Size</label></td><td>0.004</td></tr>
            <tr><td class="gutter"></td><td class="key">Export Format</td><td>Standard</td></tr>
            <tr><td class="gutter"></td><td class="key">Export Preview Surface Mesh</td><td>No</td></tr>
            <tr><td class="gutter"><button type="button" class="toggle" aria-label="Expand">+</button></td><th colspan="2">Sizing</th></tr>
            <tr><td class="gutter"><button type="button" class="toggle" aria-label="Expand">+</button></td><th colspan="2">Quality</th></tr>
            <tr><td class="gutter"><button type="button" class="toggle" aria-label="Expand">+</button></td><th colspan="2">Inflation</th></tr>
            <tr><td class="gutter"><button type="button" class="toggle" aria-label="Expand">+</button></td><th colspan="2">Assembly Meshing</th></tr>
            <tr><td class="gutter"><button type="button" class="toggle" aria-label="Expand">+</button></td><th colspan="2">Advanced</th></tr>
            <tr><td class="gutter"><button type="button" class="toggle" aria-label="Expand">+</button></td><th colspan="2">Statistics</th></tr>
          </table>
        </div>
      </section>
    </div>

    <div class="workspace">
      <!-- Graphics window -->
      <section class="graphics">
        <svg class="scene" viewBox="0 0 1440 612" preserveAspectRatio="xMidYMid meet">
          <defs>
            <linearGradient id="plate" x1="0" y1="0" x2="0" y2="1"><stop offset="0" stop-color="#7f99da"/><stop offset="1" stop-color="#e6e7ef"/></linearGradient>
            <radialGradient id="ballBlue"><stop offset="0" stop-color="#2020ff"/><stop offset="1" stop-color="#0000a0"/></radialGradient>
            <radialGradient id="ballCyan" cx=".4" cy=".4"><stop offset="0" stop-color="#30e0d8"/><stop offset="1" stop-color="#089090"/></radialGradient>
          </defs>
          <rect x="316.500" y="60.500" width="945" height="502" fill="url(#plate)"/>
          <path d="M316.500 562.500V60.500h945v502" fill="none" stroke="#dfe4f0"/>
          <path d="M316.500 562.500h945" stroke="#dcdce2"/>
          <circle cx="474.500" cy="311.500" r="16" fill="#afc2f0" stroke="#e8ecf8"/>
          <path d="M559 144.500h15M566.500 137v15" stroke="#6a90e4"/>
          <g class="ruler-text">
            <text x="544" y="553">0.000</text>
            <text x="700" y="553">0.050</text>
            <text x="859" y="553">0.100 (m)</text>
            <text x="621" y="588">0.025</text>
            <text x="780" y="588">0.075</text>
          </g>
          <path d="M564 559.500h313v11H564z" fill="#f8f9fd" stroke="#222"/>
          <path d="M563 559h79v12h-79zM720 559h79v12h-79z"/>
          <text class="logo" x="1411" y="61" text-anchor="end">ANSYS</text>
          <text class="release" x="1410" y="84" text-anchor="end">2019 <tspan font-weight="700">R1</tspan></text>
          <path d="M1328 512V455" stroke="#0b8212" stroke-width="5"/>
          <path d="M1328 439l8 18h-16z" fill="#0a900f"/>
          <path d="M1330 514.500h62" stroke="#c01014" stroke-width="5"/>
          <path d="M1404 514.500l-17-8v16z" fill="#d80c10"/>
          <text class="axis" x="1328" y="514" fill="#1616c0">Z</text>
          <circle cx="1328" cy="514" r="8" fill="url(#ballBlue)"/>
          <circle cx="1364" cy="478" r="8" fill="url(#ballCyan)"/>
          <text class="axis" x="1328" y="426" fill="#3aa83a">Y</text>
          <text class="axis" x="1417" y="516" fill="#e03030">X</text>
        </svg>
        <div class="tabs">
          <button type="button" class="tab on"><svg viewBox="0 0 10 20"><path d="M.5 0l9 20"/></svg><span>Geometry</span></button>
          <button type="button" class="tab"><svg viewBox="0 0 10 20"><path class="cover" d="M0 0h9L0 20z"/><path d="M0 20L9.500 0M5 9l5 11"/></svg><span>Print Preview</span></button>
          <button type="button" class="tab"><svg viewBox="0 0 10 20"><path d="M0 0l10 20M0 20l5-10"/></svg><span>Report Preview</span><svg viewBox="0 0 10 20"><path d="M0 20L9.500 0"/></svg></button>
        </div>
      </section>

      <!-- Messages -->
      <section class="panel messages">
        <header class="panel-title"><h2>Messages</h2><svg class="tack"><use href="#i-thumbtack"/></svg><svg class="close"><use href="#i-cross"/></svg></header>
        <div class="panel-body">
          <table class="log">
            <tr><th class="col-mark"></th><th class="col-text">Text</th><th class="col-assoc">Association</th><th class="col-time">Timestamp</th></tr>
          </table>
        </div>
        <div class="watermark">知乎 @yeah right</div>
      </section>
    </div>
  </main>

  <footer class="status">
    <div class="cell cell-main"></div>
    <div class="cell cell-help"></div>
    <div class="cell cell-msg"><span class="count"><svg class="icon"><use href="#i-balloon"/></svg><b>0</b></span>No Messages</div>
    <div class="cell cell-sel">No Selection</div>
    <div class="cell cell-units"><span>Metric (m, kg, N, s, V, A)</span><span>Degrees</span><span>rad/s</span><span>Celsius</span></div>
    <svg class="sizegrip" viewBox="0 0 16 16"><path d="M1 16L16 1M6 16L16 6M11 16l5-5" stroke="#999" stroke-width="1.500"/></svg>
  </footer>

</body>
</html>
```

FILE: styles.css
```css
* {
  box-sizing: border-box;
}
body {
  margin: 0;
  min-height: 100vh;
  display: flex;
  flex-direction: column;
  font-family: "Noto Sans", "Noto Sans CJK SC", sans-serif;
  font-size: 15px;
  line-height: 20px;
  color: #222;
  background-color: #fafafa;
  border-bottom: 2px solid #3c3e42;
}
button, select, input {
  font: inherit;
  color: inherit;
}
button {
  border: none;
  background: none;
  padding: 0;
}
h1, h2 {
  margin: 0;
  font-weight: 400;
}
.sprite {
  display: none;
}
.icon {
  width: 22px;
  height: 22px;
  flex: none;
}
.caret {
  width: 12px;
  height: 7px;
  flex: none;
  color: #000;
}

/* Title bar */
.titlebar {
  display: flex;
  align-items: center;
  height: 29px;
  padding: 0 3px 0 1px;
  background-color: #fff;
}
.titlebar h1 {
  flex: 1;
  margin-left: 4px;
  font-family: "Open Sans", sans-serif;
  font-size: 16px;
  color: #000;
}
.window-buttons {
  display: flex;
}
.window-buttons button {
  width: 58px;
  height: 28px;
}
.window-buttons svg {
  width: 12px;
  height: 12px;
  display: block;
  margin: 0 auto;
}

/* Toolbars */
.toolbars {
  background-color: #efefef;
  padding-bottom: 1px;
}
.toolbar {
  display: flex;
  height: 30px;
  border-bottom: 1px solid #a0a0a0;
}
.toolbar:last-child {
  border-bottom-color: #efefef;
}
.band {
  display: flex;
  align-items: center;
  padding: 3px 0 0 2px;
  border-top: 1px solid #fcfcfc;
}
.band::before {
  content: "";
  width: 3px;
  height: 22px;
  margin-right: 4px;
  border-left: 1px solid #fff;
  border-right: 1px solid #a0a0a0;
  border-bottom: 1px solid #a0a0a0;
}
.band + .band {
  margin-left: 3px;
  border-left: 1px solid #fff;
}
.band:not(:last-child) {
  padding-right: 6px;
  border-right: 1px solid #909090;
}
.band:last-child {
  flex: 1;
}
.menu {
  padding: 0 7px;
}
.tool {
  display: flex;
  align-items: center;
  height: 26px;
  padding: 0 6px;
  white-space: nowrap;
}
.tool span {
  margin: 0 6px 0 2px;
}
.tool .caret {
  margin: 0 -3px 0 2px;
}
.tool span + .caret {
  margin-left: 2px;
}
.tool:disabled {
  color: #a0a0a0;
}
.tool:disabled .caret, select:disabled + .caret {
  color: #999;
}
.tool.pressed {
  background-color: #f6f6f6;
  border-top: 1px solid #888;
  border-left: 1px solid #888;
}
.tool.lit {
  background-color: #f8f8f8;
}
.tool.numbered {
  padding-right: 8px;
}
.tool.numbered b {
  margin-left: -8px;
  align-self: flex-end;
  width: 8px;
  font-size: 13px;
  line-height: 15px;
}
.sep {
  width: 1px;
  height: 24px;
  margin: 0 4px 0 5px;
  background-color: #a0a0a0;
}
.combo {
  display: grid;
  align-items: center;
  width: 182px;
  height: 24px;
  margin: 0 3px 0 8px;
  border: 1px solid #f8f8f8;
}
.combo.short {
  width: 170px;
}
.combo select {
  grid-area: 1 / 1;
  width: 100%;
  height: 22px;
  padding: 0 4px;
  border: none;
  background: none;
  appearance: none;
  font-size: 14px;
  opacity: 1;
}
.combo select:disabled {
  color: #909090;
}
.combo .caret {
  grid-area: 1 / 1;
  justify-self: end;
  width: 9px;
  height: 5px;
  margin-right: 4px;
}
.caption {
  margin: 0 6px 0 3px;
  padding-bottom: 4px;
  font-size: 14px;
}
.slider {
  width: 168px;
  height: 20px;
  margin: 0 5px 6px 14px;
  appearance: none;
  background: linear-gradient(#888, #888) center / 100% 2px no-repeat;
}
.slider::-webkit-slider-thumb {
  appearance: none;
  width: 6px;
  height: 14px;
  background-color: #efefef;
  border: 1px solid #999;
  border-radius: 0 0 3px 3px;
}
.context {
  margin: 0 5px 0 1px;
}

/* Docked panels */
main {
  flex: 1;
  display: flex;
  gap: 5px;
  padding-bottom: 8px;
}
.dock {
  flex: none;
  width: 470px;
  display: flex;
  flex-direction: column;
  gap: 6px;
}
.workspace {
  flex: 1;
  min-width: 0;
  display: flex;
  flex-direction: column;
  gap: 7px;
}
.panel {
  display: flex;
  flex-direction: column;
}
.panel-title {
  display: flex;
  align-items: center;
  gap: 8px;
  height: 28px;
  padding: 0 5px;
  background: linear-gradient(90deg, #bfcddb, #d7e4f2);
}
.panel-title.active {
  color: #fff;
  background: linear-gradient(90deg, #99b4d1, #b9d1ea);
}
.panel-title h2 {
  flex: 1;
  font-size: 15px;
}
.tack {
  width: 12px;
  height: 14px;
}
.close {
  width: 12px;
  height: 12px;
}
.panel-body {
  flex: 1;
  display: flex;
  flex-direction: column;
  margin: 0 2px 0 1px;
  border-top: 2px solid #6f6f6f;
  border-left: 1px solid #888;
  border-right: 1px solid #ddd;
}
.outline {
  flex: 1;
}
.outline .panel-body {
  border-bottom: 1px solid #ddd;
  background-color: #fff;
}
.outline .band {
  flex: none;
  height: 31px;
  background-color: #efefef;
}
.outline .filter {
  padding-top: 5px;
  border-right: none;
  border-bottom: 1px solid #a0a0a0;
}
.outline .tree-tools {
  margin-left: 0;
  padding-top: 0;
  border-left: none;
}
.tree-tools .tool {
  padding: 0 4px;
}
.filter label {
  padding-bottom: 4px;
}
.combo.white {
  width: 118px;
  height: 22px;
  margin: 0 11px;
  background: linear-gradient(90deg, #fff 102px, #efefef 102px);
  border: none;
}
.filter-text {
  width: 179px;
  height: 22px;
  border: none;
  background-color: #fff;
}

/* Outline tree */
.tree {
  font-size: 13px;
  line-height: 20px;
}
.tree ul {
  list-style: none;
  margin: 0;
  padding: 0 0 0 34px;
}
.tree > ul {
  padding-left: 10px;
}
.tree li {
  position: relative;
}
.tree li::before {
  content: "";
  position: absolute;
  left: 6px;
  top: 0;
  bottom: 0;
  border-left: 1px dotted #888;
}
.tree li:last-child::before {
  bottom: auto;
  height: 10px;
}
.node {
  display: flex;
  align-items: center;
  height: 20px;
}
.node.root {
  padding-left: 10px;
}
.node .icon {
  width: 20px;
  height: 20px;
}
.toggle {
  position: relative;
  display: block;
  width: 12px;
  height: 12px;
  border: 1px solid #888;
  background-color: #fff;
  color: #000;
  font-size: 12px;
  font-weight: 700;
  line-height: 10px;
  text-align: center;
}
.stub {
  width: 18px;
  margin-left: 6px;
  border-top: 1px dotted #888;
}
.toggle + .stub {
  width: 12px;
  margin-left: 0;
}
.state {
  width: 10px;
  height: 12px;
  align-self: flex-end;
}
.name {
  margin-left: 2px;
  padding: 0 3px;
}
.name.strong {
  font-size: 14px;
  font-weight: 700;
  margin-left: 3px;
}
.name.current {
  background-color: #efefef;
}

/* Details grid */
.details {
  height: 369px;
}
.props {
  flex: 1;
  width: 100%;
  border-collapse: collapse;
  background-color: #fff;
  font-size: 14px;
  line-height: 18px;
  color: #111;
}
.props td, .props th {
  padding: 0 4px;
  border: 1px solid #a0a0a0;
  text-align: left;
  white-space: nowrap;
}
.props th {
  font-family: "Open Sans", sans-serif;
  font-weight: 700;
}
.props .gutter {
  width: 18px;
  padding: 0 3px;
  border-width: 0 1px 0 0;
}
.props .gutter .toggle {
  width: 11px;
  height: 11px;
  line-height: 9px;
}
.props .key {
  width: 200px;
}
.props .selected {
  background-color: #0078d7;
  color: #fff;
}
.props label {
  display: flex;
  align-items: center;
  gap: 6px;
}
.props input {
  appearance: none;
  width: 14px;
  height: 14px;
  margin: 0;
  background-color: #fff;
}

/* Graphics window */
.graphics {
  flex: 1;
  display: flex;
  flex-direction: column;
  margin-right: 3px;
  border-top: 2px solid #777;
  border-left: 2px solid #777;
  background: linear-gradient(#6f8fe0, #fff 97%);
}
.scene {
  flex: 1;
  width: 100%;
  min-height: 0;
}
.ruler-text {
  font-size: 14px;
}
.logo {
  font-family: "Liberation Sans Narrow", "Noto Sans", sans-serif;
  font-size: 30px;
  font-weight: 900;
  fill: #fff;
}
.release {
  font-size: 20px;
  fill: #fff;
}
.axis {
  font-size: 16px;
  font-weight: 300;
}
.tabs {
  display: flex;
  height: 22px;
  border: 1px solid #000;
  border-width: 1px 1px 2px 0;
  background-color: #efefef;
}
.tab {
  display: flex;
  align-items: center;
  font-size: 13px;
  line-height: 18px;
}
.tab svg {
  width: 10px;
  height: 20px;
  fill: none;
  stroke: #000;
}
.tab span {
  padding: 0 3px;
}
.tab.on {
  margin-top: -1px;
  background-color: #fff;
  font-weight: 700;
}
.tab .cover {
  fill: #fff;
  stroke: none;
}

/* Messages */
.messages {
  position: relative;
  height: 191px;
}
.messages .panel-body {
  background-color: #a0a0a0;
  margin-left: 0;
}
.log {
  align-self: flex-start;
  border-collapse: collapse;
  background-color: #efefef;
  line-height: 20px;
}
.log th {
  height: 23px;
  padding: 0 5px;
  border: 1px solid #808080;
  border-width: 0 1px 1px 0;
  text-align: left;
  font-weight: 400;
}
.col-mark {
  width: 63px;
}
.col-text {
  width: 581px;
}
.col-assoc {
  width: 382px;
}
.col-time {
  width: 274px;
}
.watermark {
  position: absolute;
  right: 50px;
  bottom: 20px;
  font-family: "Noto Sans CJK SC", sans-serif;
  font-size: 57px;
  line-height: 80px;
  color: #fff;
  text-shadow: 3px 4px 0 #707070;
  white-space: nowrap;
}

/* Status bar */
.status {
  display: flex;
  gap: 4px;
  height: 28px;
  background-color: #efefef;
}
.cell {
  display: flex;
  align-items: center;
  padding: 0 0 5px 1px;
  border-top: 1px solid #a0a0a0;
  border-left: 1px solid #a0a0a0;
  border-right: 1px solid #fff;
  white-space: nowrap;
}
.cell-main {
  width: 516px;
}
.cell-help {
  width: 246px;
}
.cell-msg {
  width: 208px;
}
.cell-sel {
  flex: 1;
}
.cell-units {
  width: 438px;
  gap: 26px;
}
.count {
  display: grid;
  width: 25px;
}
.count .icon {
  grid-area: 1 / 1;
  width: 20px;
  height: 20px;
}
.count b {
  grid-area: 1 / 1;
  margin-left: 7px;
  font-size: 16px;
  line-height: 16px;
  font-weight: 400;
  z-index: 1;
}
.sizegrip {
  width: 16px;
  height: 16px;
  margin-left: 20px;
  align-self: flex-end;
}
```
